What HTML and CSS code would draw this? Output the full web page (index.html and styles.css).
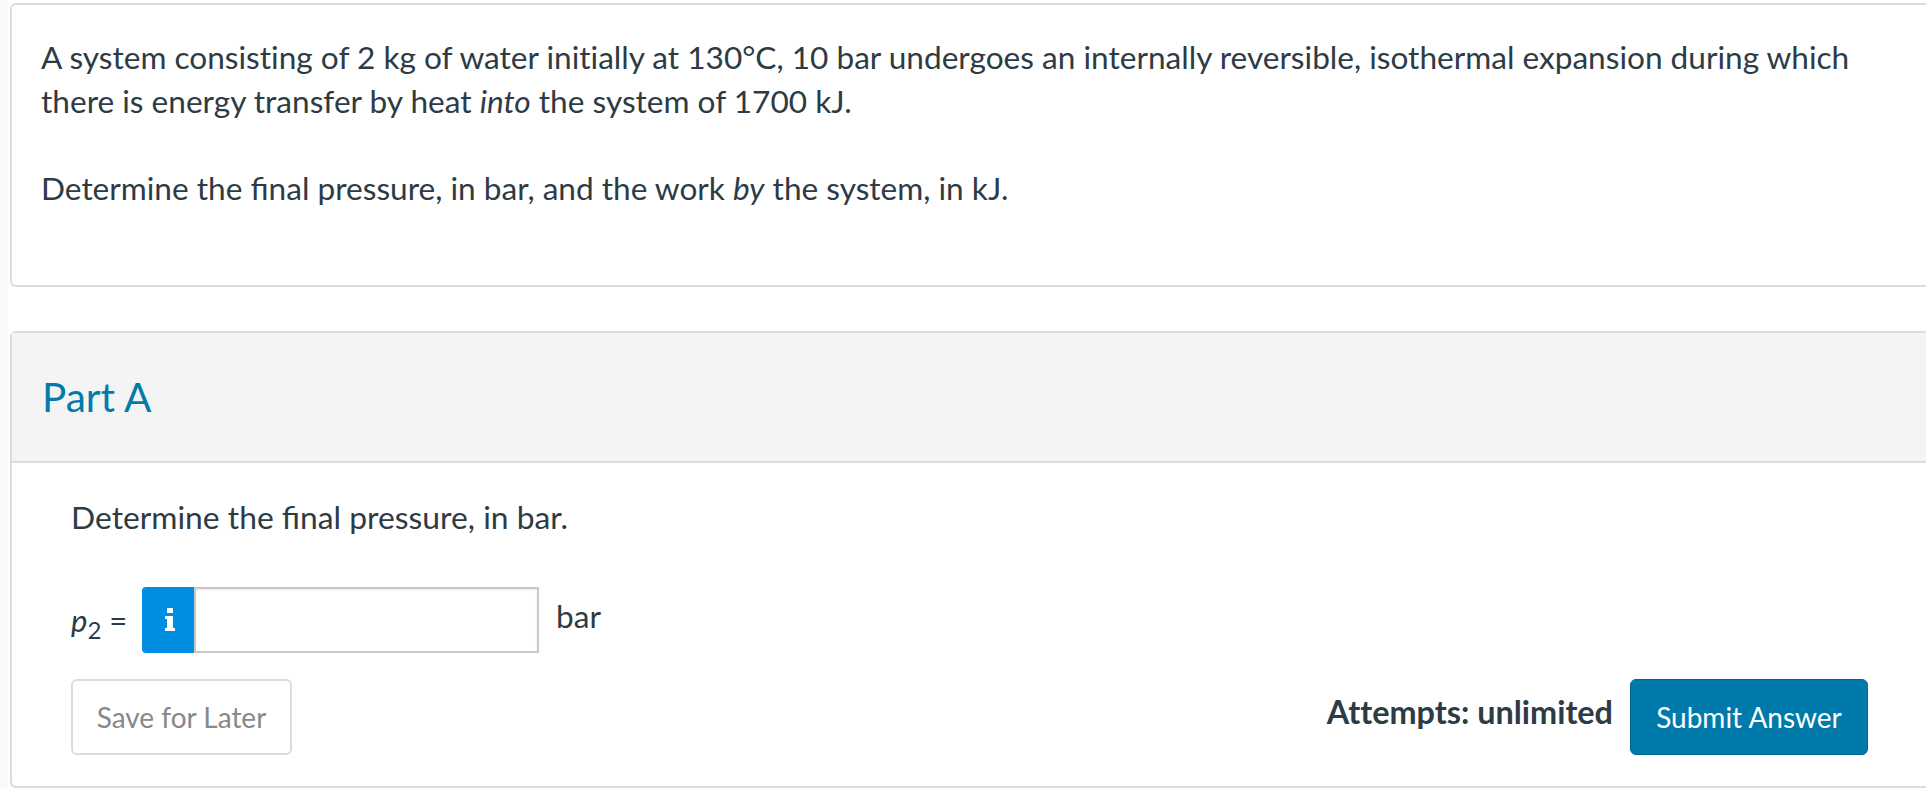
FILE: index.html
```html
<!DOCTYPE html>
<html lang="en">
<head>
  <meta charset="UTF-8">
  <title>Part A</title>
  <link rel="stylesheet" href="styles.css">
</head>

<body>

  <div class="card intro">
    <p>A system consisting of 2 kg of water initially at 130°C, 10 bar undergoes an internally reversible, isothermal expansion during which there is energy transfer by heat <em>into</em> the system of 1700 kJ.</p>
    <p>Determine the <span class="lig">fi</span>nal pressure, in bar, and the work <em>by</em> the system, in kJ.</p>
  </div>

  <div class="card part">
    <div class="part-header">
      <h2>Part A</h2>
    </div>
    <div class="part-body">
      <p class="question">Determine the <span class="lig">fi</span>nal pressure, in bar.</p>

      <div class="answer-row">
        <span class="answer-label"><em>p</em><sub>2</sub> =</span>
        <button class="info-btn">
          <svg viewBox="0 0 12 23" width="12" height="23">
            <path fill="#fff" d="M3 0h6v5H3zM1 8h8v12h2v3H1v-3h2v-9H1z"/>
          </svg>
        </button>
        <input class="answer-input" type="text">
        <span class="answer-unit">bar</span>
      </div>

      <div class="action-row">
        <button class="save-btn">Save for Later</button>
        <span class="attempts">Attempts: unlimited</span>
        <button class="submit-btn">Submit Answer</button>
      </div>
    </div>
  </div>

</body>
</html>
```

FILE: styles.css
```css
html, body {
  height: 100%;
}

body {
  margin: 0;
  padding: 3px 0 0 10px;
  box-sizing: border-box;
  overflow: hidden;
  font-family: Lato, Arial, sans-serif;
  font-size: 31.6px;
  font-variant-ligatures: none;
  color: #2d3b45;
  background: linear-gradient(to right, #fafafa 8px, #ffffff 8px);
}

.lig {
  font-variant-ligatures: normal;
}

.card {
  background-color: #fff;
  border: 2px solid #dcdcdc;
  border-right: none;
  border-radius: 6px 0 0 6px;
  box-sizing: border-box;
}

.intro {
  height: 284px;
  padding: 30px 40px 0 29px;
  line-height: 44px;
}

.intro p {
  margin: 0 0 43px;
}

.part {
  height: 457px;
  margin-top: 44px;
}

.part-header {
  height: 127px;
  padding: 0 0 1px 30px;
  background-color: #f4f4f4;
  border-bottom: 2px solid #dcdcdc;
  display: flex;
  align-items: center;
}

.part-header h2 {
  margin: 0;
  font-size: 40.5px;
  font-weight: 400;
  color: #007bab;
}

.part-body {
  padding: 32px 58px 0 59px;
}

.question {
  margin: 0 0 48px;
  font-size: 31.8px;
  line-height: 44px;
}

.answer-row {
  display: flex;
  align-items: center;
  height: 66px;
}

.answer-label {
  width: 71px;
  font-size: 31px;
}

sub {
  font-size: 24px;
  line-height: 0;
}

.info-btn {
  display: flex;
  align-items: center;
  justify-content: center;
  width: 52px;
  height: 66px;
  padding: 0 0 2px 4px;
  border: none;
  border-radius: 4px 0 0 4px;
  background-color: #008ee2;
}

.answer-input {
  width: 345px;
  height: 66px;
  box-sizing: border-box;
  border: 2px solid #c8c8c8;
  box-shadow: inset 0 1px 2px rgba(0, 0, 0, 0.08);
  outline: none;
}

.answer-unit {
  margin: 0 0 9px 17px;
}

.action-row {
  display: flex;
  align-items: center;
  margin-top: 26px;
}

button {
  font-family: Lato, Arial, sans-serif;
  font-variant-ligatures: none;
}

.save-btn {
  width: 221px;
  height: 76px;
  padding-bottom: 2px;
  margin-right: auto;
  border: 2px solid #dcdcdc;
  border-radius: 6px;
  background-color: #fff;
  color: #888;
  font-size: 28px;
}

.attempts {
  font-size: 32.4px;
  font-weight: bold;
  margin: 0 17px 11px 0;
}

.submit-btn {
  width: 238px;
  height: 76px;
  padding-bottom: 2px;
  border: 1px solid #00688f;
  border-radius: 6px;
  background-color: #0079ab;
  color: #fff;
  font-size: 28px;
}
```
